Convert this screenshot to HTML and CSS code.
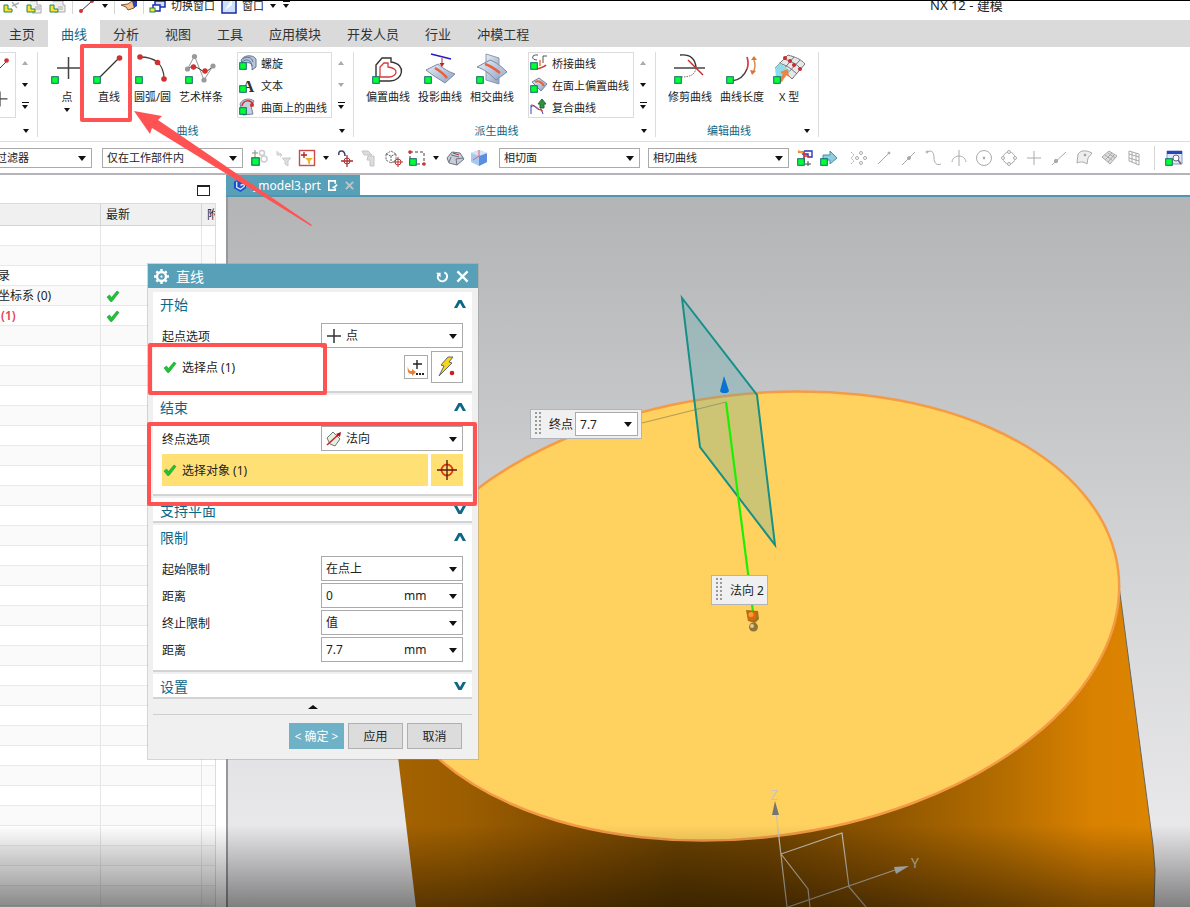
FILE: index.html
```html
<!DOCTYPE html>
<html lang="zh-CN">
<head>
  <meta charset="utf-8">
  <title>NX 12 - 建模</title>
  <link rel="stylesheet" href="styles.css">
</head>
<body>
  <svg class="sprite" width="0" height="0" aria-hidden="true">
    <defs>
      <linearGradient id="surface" x1="0" y1="0" x2="1" y2="1">
        <stop offset="0" stop-color="#e6edf6"/><stop offset="1" stop-color="#8fa3c4"/>
      </linearGradient>
    </defs>
    <symbol id="green" viewBox="0 0 8 8"><rect x=".7" y=".7" width="6.6" height="6.6" fill="#0f3" stroke="#126a6a"/></symbol>
    <symbol id="check" viewBox="0 0 14 14"><path d="M1 8 3.500 6 5.500 8.500 11 2 13 3.500 6 12.500 4.500 12.500Z" fill="#1fc436" stroke="#129a28" stroke-width=".6"/></symbol>
    <symbol id="up" viewBox="0 0 12 10"><path d="M0 9 4.400 1H7.600L12 9H8.800L6 4 3.200 9Z" fill="#0d6787"/></symbol>
    <symbol id="down" viewBox="0 0 12 10"><path d="M0 1 4.400 9H7.600L12 1H8.800L6 6 3.200 1Z" fill="#0d6787"/></symbol>
  </svg>

  <header class="quickbar">
    <div class="quick-tools">
      <svg class="qi" viewBox="0 0 18 14"><path d="M1 4h4v4h4v3H1z" fill="#ffdf33" stroke="#22884c"/><path d="M9 1l5 6M16 2L9 5" stroke="#a9adb2" fill="none" stroke-width="1.500"/></svg>
      <svg class="qi" viewBox="0 0 18 14"><path d="M4 0h7v4h4v8H6" fill="#f2f2f2" stroke="#aaa"/><path d="M1 4h4v4h4v3H1z" fill="#ffdf33" stroke="#22884c"/><path d="M9 6h5M9 8h5" stroke="#aaa"/></svg>
      <svg class="qi" viewBox="0 0 18 14"><path d="M3 0h11v4h2v7H6" fill="#eee" stroke="#aaa"/><path d="M1 4h4v4h4v3H1z" fill="#ffdf33" stroke="#22884c"/><path d="M9 6h5M9 8h5" stroke="#aaa"/></svg>
      <span class="qsep"></span>
      <svg class="qi" viewBox="0 0 18 14"><path d="M3 10 13 1" stroke="#333"/><circle cx="3" cy="10" r="2" fill="#c33"/><circle cx="14" cy="0" r="2" fill="#c33"/></svg>
      <i class="caret"></i>
      <span class="qsep"></span>
      <svg class="qi" viewBox="0 0 18 14"><path d="M1 4 8 3 12 0 16 2 14 7 8 9 6 6Z" fill="#f3c58c" stroke="#7b5a3a"/><path d="M12 0 17-1 17 5 14 7Z" fill="#2f3fb5"/></svg>
      <span class="qsep"></span>
      <svg class="qi" viewBox="0 0 18 14"><path d="M6 0h10v6H6z" fill="#cfe0ff" stroke="#1b2cb5" stroke-width="1.500"/><path d="M4 4h7v6H4z" fill="#fff" stroke="#1b2cb5" stroke-width="1.500"/><rect x="1" y="7" width="5" height="4" fill="#ffdf33" stroke="#22884c"/></svg>
      <span>切换窗口</span>
      <svg class="qi window" viewBox="0 0 18 14"><rect x="2" y="-4" width="14" height="16" fill="#cfe0ff" stroke="#1a2a9c" stroke-width="1.500"/><path d="M5 9 12-2v6z" fill="#fff"/></svg>
      <span>窗口</span>
      <i class="caret"></i>
      <i class="caret more"></i>
    </div>
    <div class="app-title">NX 12 - 建模</div>
  </header>

  <nav class="tabs">
    <button>主页</button>
    <button class="active">曲线</button>
    <button>分析</button>
    <button>视图</button>
    <button>工具</button>
    <button>应用模块</button>
    <button>开发人员</button>
    <button>行业</button>
    <button>冲模工程</button>
  </nav>

  <div class="ribbon">
    <section class="group first">
      <div class="tools">
        <div class="gallery cut">
          <svg viewBox="0 0 16 66"><path d="M-2 18 7 9" stroke="#333"/><circle cx="7" cy="8" r="2.500" fill="#c33"/><path d="M-2 49H8M0 41V57" stroke="#444" stroke-width="1.300"/></svg>
        </div>
        <div class="scroller"><i class="caret dim flip"></i><i class="caret"></i><i class="caret more"></i></div>
      </div>
      <div class="caption"><span></span><i class="caret"></i></div>
    </section>

    <section class="group">
      <div class="tools">
        <button class="tool">
          <svg viewBox="0 0 32 32"><path d="M6 14H29M17.500 3V25" stroke="#444" stroke-width="1.500"/><use href="#green" y="22" width="8" height="8"/></svg>
          点<i class="caret"></i>
        </button>
        <button class="tool">
          <svg viewBox="0 0 32 32"><path d="M5 25 26 4" stroke="#333" stroke-width="1.300"/><circle cx="26.500" cy="4" r="2.800" fill="#cf3030"/><use href="#green" y="22" width="8" height="8"/></svg>
          直线
        </button>
        <button class="tool">
          <svg viewBox="0 0 32 32"><path d="M3 3C18 3 27 10 27 25" fill="none" stroke="#444" stroke-width="1.300"/><g fill="#cf3030"><circle cx="3" cy="3" r="2.800"/><circle cx="20.500" cy="8.500" r="2.800"/><circle cx="27" cy="25" r="2.800"/></g><use href="#green" x="-2" y="22" width="8" height="8"/></svg>
          圆弧/圆
        </button>
        <button class="tool">
          <svg viewBox="0 0 32 32"><path d="M2.500 15 9.500 2 19 26 28 12" fill="none" stroke="#999"/><path d="M2 15C7 11 12 13 16 16S22 18 28 12" fill="none" stroke="#333"/><g fill="#999"><circle cx="9.500" cy="2.500" r="2.600"/><circle cx="2.500" cy="15" r="2.600"/><circle cx="19" cy="26" r="2.600"/><circle cx="28" cy="12" r="2.600"/></g><circle cx="8.500" cy="13" r="2.700" fill="#cf3030"/><circle cx="20" cy="17" r="2.700" fill="#cf3030"/><use href="#green" y="22" width="8" height="8"/></svg>
          艺术样条
        </button>
        <div class="gallery">
          <button><svg viewBox="0 0 20 20"><path d="M3 8C4 2 15 1 18 6V14L14 17C15 10 11 8 6 11Z" fill="#b7c4da" stroke="#66748e"/><path d="M5 6C9 3 14 4 15 9M4 9C9 5 13 7 14 13" fill="none" stroke="#5b6d90"/><use href="#green" x="1" y="9" width="8" height="8"/></svg>螺旋</button>
          <button><svg viewBox="0 0 20 20"><text x="4" y="17" font-family="Liberation Serif" font-weight="bold" font-size="17" fill="#333">A</text><use href="#green" x="1" y="10" width="8" height="8"/></svg>文本</button>
          <button><svg viewBox="0 0 20 20"><path d="M2 7C5 1 12 1 16 4L13 9 15 17 5 18Z" fill="#c3cede" stroke="#75819a"/><path d="M4 9C5 3 12 2 15 7" fill="none" stroke="#cf3030" stroke-width="1.500"/><circle cx="14" cy="8" r="2" fill="#cf3030"/><use href="#green" x="1" y="10" width="8" height="8"/></svg>曲面上的曲线</button>
        </div>
        <div class="scroller"><i class="caret dim flip"></i><i class="caret dim"></i><i class="caret more"></i></div>
      </div>
      <div class="caption"><span>曲线</span><i class="caret"></i></div>
    </section>

    <section class="group">
      <div class="tools">
        <button class="tool">
          <svg viewBox="0 0 32 32"><path d="M4 26V11L10 4H19V8C35 10 31 27 18 27H4Z" fill="#fff" stroke="#333" stroke-width="1.400"/><path d="M8 23V13L12 9H16V13C28 14 25 23 17 23Z" fill="none" stroke="#d83a3a" stroke-width="1.300"/><use href="#green" y="22" width="8" height="8"/></svg>
          偏置曲线
        </button>
        <button class="tool">
          <svg viewBox="0 0 32 32"><path d="M2 16 14 10C20 15 25 18 31 20L21 29C15 25 8 21 2 16Z" fill="url(#surface)" stroke="#7d8ba6"/><path d="M11 14C16 17 20 20 23 24" fill="none" stroke="#e8603c" stroke-width="2.500"/><path d="M7 0 27 5" stroke="#2020c8" stroke-width="1.800"/><path d="M18 4V11" stroke="#b22"/><path d="M15.500 9H20.500L18 13Z" fill="#b22"/><use href="#green" y="22" width="8" height="8"/></svg>
          投影曲线
        </button>
        <button class="tool">
          <svg viewBox="0 0 32 32"><path d="M10 0 23 4V30L10 26Z" fill="url(#surface)" stroke="#8c99b0"/><path d="M1 13 14 6C20 8 26 13 31 18L20 26C14 20 8 15 1 13Z" fill="url(#surface)" fill-opacity=".9" stroke="#7d8ba6"/><path d="M9 10C15 12 19 15 24 19" fill="none" stroke="#e8603c" stroke-width="2.500"/><use href="#green" y="22" width="8" height="8"/></svg>
          相交曲线
        </button>
        <div class="gallery">
          <button><svg viewBox="0 0 20 20"><path d="M9 2C2 1 2 7 8 7M18 3H14V10" fill="none" stroke="#555"/><path d="M8 16C12 15 15 14 17 12" fill="none" stroke="#cf3030" stroke-width="1.500"/><path d="M11 7V13" stroke="#e67a35" stroke-width="1.500"/><use href="#green" x="1" y="9" width="8" height="8"/></svg>桥接曲线</button>
          <button><svg viewBox="0 0 20 20"><path d="M3 7 10 3 18 9 12 16Z" fill="url(#surface)" stroke="#75819a"/><path d="M6 7C9 5 13 7 15 11" fill="none" stroke="#e8603c" stroke-width="2"/><use href="#green" x="1" y="10" width="8" height="8"/></svg>在面上偏置曲线</button>
          <button><svg viewBox="0 0 20 20"><path d="M2 17V8M2 10C6 6 8 15 12 12L14 17" fill="none" stroke="#3b45b5"/><path d="M2 8C7 8 9 13 14 14" fill="none" stroke="#cf3030"/><path d="M13 2 17 7H15V11H11V7H9Z" fill="#2f9144" stroke="#1d6b2e"/></svg>复合曲线</button>
        </div>
        <div class="scroller"><i class="caret dim flip"></i><i class="caret"></i><i class="caret more"></i></div>
      </div>
      <div class="caption"><span>派生曲线</span><i class="caret"></i></div>
    </section>

    <section class="group">
      <div class="tools">
        <button class="tool">
          <svg viewBox="0 0 32 32"><path d="M6 1C16 0 21 4 22 13" fill="none" stroke="#333" stroke-width="1.400"/><path d="M0 14H31" stroke="#444" stroke-width="1.500"/><path d="M22 14C21 21 16 23 7 23" fill="none" stroke="#777" stroke-dasharray="1.500 1"/><path d="M14 6 29 21" stroke="#c92a2a" stroke-width="1.400"/><use href="#green" y="22" width="8" height="8"/></svg>
          修剪曲线
        </button>
        <button class="tool">
          <svg viewBox="0 0 32 32"><path d="M6 27C15 26 19 20 21 15" fill="none" stroke="#444" stroke-width="1.500"/><path d="M21 15C23 10 22 6 21 3" fill="none" stroke="#d83a3a" stroke-width="1.700"/><path d="M28 6C30 11 29 15 27 19" fill="none" stroke="#d88a55" stroke-width="1.500"/><path d="M25 6 28 2 31 6ZM24 16 26 21 30 17Z" fill="#dd743c"/><use href="#green" y="22" width="8" height="8"/></svg>
          曲线长度
        </button>
        <button class="tool">
          <svg viewBox="0 0 32 32"><path d="M2 14 15 1C22 3 28 5 32 10L19 25C14 19 9 17 2 14Z" fill="#e5e7ea" stroke="#777"/><path d="M6 9C13 11 19 15 24 20M11 5C18 7 24 10 28 15M9 17 21 3M14 20 27 6" fill="none" stroke="#777"/><path d="M2 14 7 9 17 17 12 24 3 24Z" fill="#8edbe9"/><path d="M5 27 10 20 7 18 15 15 16 23 13 21 9 28Z" fill="#ef8440"/><g fill="#c92a2a"><circle cx="12" cy="4" r="2"/><circle cx="17" cy="7" r="2"/><circle cx="21" cy="11" r="2"/><circle cx="27" cy="15" r="2"/></g><use href="#green" y="22" width="8" height="8"/></svg>
          X 型
        </button>
      </div>
      <div class="caption"><span>编辑曲线</span><i class="caret"></i></div>
    </section>
  </div>

  <div class="selection-bar">
    <label class="combo bar-combo leading"><select aria-label="选择过滤器"><option>无选择过滤器</option></select></label>
    <label class="combo bar-combo"><select aria-label="选择范围"><option>仅在工作部件内</option></select></label>
    <div class="icon-row">
      <svg viewBox="0 0 20 20"><path d="M6 2V10M3 5H9" stroke="#888"/><circle cx="13" cy="5" r="2.500" fill="none" stroke="#ccc" stroke-width="1.500"/><circle cx="15" cy="11" r="3" fill="none" stroke="#ccc" stroke-width="1.500"/><use href="#green" x="2" y="9" width="9" height="9"/></svg>
      <svg viewBox="0 0 20 20"><path d="M4 3V7H9L7 5M9 7 7 9M9 10H18L15 13V18L12 16V13Z" fill="#ddd" stroke="#ccc"/></svg>
      <svg viewBox="0 0 20 20"><rect x="2.500" y="2.500" width="15" height="15" fill="#fff" stroke="#cc4a4a" stroke-width="1.400"/><path d="M7 4V10M4 7H10" stroke="#a22" stroke-width="1.300"/><path d="M8 10H16L13 13V17L11 15V13Z" fill="#f0b429"/></svg>
      <i class="caret"></i>
      <svg viewBox="0 0 20 20"><path d="M4 7C2 2 10 1 10 8" fill="none" stroke="#3a3f66" stroke-width="1.500"/><circle cx="12" cy="13" r="3" fill="none" stroke="#a33"/><path d="M12 7V19M6 13H18" stroke="#a33" stroke-width="1.300"/></svg>
      <svg viewBox="0 0 20 20"><path d="M3 3H9L13 7H9L5 7ZM9 8H15V18H11V12H8Z" fill="#ddd" stroke="#c4c4c4"/></svg>
      <svg viewBox="0 0 20 20"><path d="M3 6 8 3 13 6V12L8 15 3 12ZM3 6 8 8 13 6M8 8V15" fill="none" stroke="#666" stroke-dasharray="2 1"/><circle cx="15" cy="14" r="3" fill="#fff" stroke="#b33"/><path d="M15 9V19M10 14H20" stroke="#b33"/></svg>
      <svg viewBox="0 0 20 20"><rect x="3" y="4" width="14" height="12" fill="none" stroke="#444" stroke-dasharray="3 2"/><circle cx="3" cy="4" r="1.800" fill="#cf3030"/><circle cx="17" cy="16" r="1.800" fill="#cf3030"/><use href="#green" x="2" y="10" width="8" height="8"/></svg>
      <i class="caret"></i>
      <svg viewBox="0 0 20 20"><path d="M2 10 7 4 15 5 19 11 12 17 4 15Z" fill="#c9cdd6" stroke="#6d7484"/><path d="M6 7 14 9M12 17 11 11 18 10M4 14 6 9" fill="none" stroke="#6d7484"/><path d="M8 5 14 7" stroke="#cf3030"/></svg>
      <svg viewBox="0 0 20 20"><path d="M2 5 10 2 18 5V14L10 18 2 14Z" fill="#a6c8f2"/><path d="M10 8V18L18 14V5Z" fill="#5a8fe0"/><path d="M2 5 10 2 18 5 10 8Z" fill="#d3e3f8"/><path d="M10 2V8L4 12" fill="none" stroke="#d66"/></svg>
    </div>
    <label class="combo bar-combo"><select aria-label="面规则"><option>相切面</option></select></label>
    <label class="combo bar-combo"><select aria-label="曲线规则"><option>相切曲线</option></select></label>
    <div class="icon-row">
      <svg viewBox="0 0 20 20"><path d="M9 3H17V9H13V6H7" fill="#fff" stroke="#2a36b5" stroke-width="1.400"/><path d="M3 4H9V14M9 8H14" fill="none" stroke="#c33" stroke-width="1.700"/><path d="M3 3 8 5" stroke="#f4a12b" stroke-width="2"/><path d="M10 16H16M13 13V18" stroke="#444"/><use href="#green" x="2" y="10" width="8" height="8"/></svg>
      <svg viewBox="0 0 20 20"><path d="M4 7H11V3L18 10 11 16V12H4Z" fill="#8ccfe3" stroke="#4b8ea6"/><use href="#green" x="1" y="10" width="8" height="8"/></svg>
    </div>
    <div class="icon-row snaps">
      <svg viewBox="0 0 20 20"><path d="M2 4 5 7 2 10 5 13 2 16" stroke-dasharray="2 1"/><circle cx="12" cy="5" r="1.500"/><circle cx="8" cy="10" r="1.500"/><circle cx="16" cy="10" r="1.500"/><circle cx="12" cy="15" r="1.500"/></svg>
      <svg viewBox="0 0 20 20"><path d="M4 16 15 5"/><circle cx="15" cy="5" r="1" fill="#aaa"/></svg>
      <svg viewBox="0 0 20 20"><path d="M3 17 16 4"/><circle cx="10" cy="10" r="1.500" fill="#aaa"/></svg>
      <svg viewBox="0 0 20 20"><path d="M3 4C9 1 10 6 10 10S12 18 17 16"/><circle cx="3" cy="4" r="1"/></svg>
      <svg viewBox="0 0 20 20"><path d="M10 2V18M3 14C4 6 16 6 17 14"/></svg>
      <svg viewBox="0 0 20 20"><circle cx="10" cy="10" r="7.500"/><circle cx="10" cy="10" r="1" fill="#aaa"/></svg>
      <svg viewBox="0 0 20 20"><circle cx="10" cy="10" r="6"/><circle cx="10" cy="4" r="1.500" fill="#fff"/><circle cx="4" cy="10" r="1.500" fill="#fff"/><circle cx="16" cy="10" r="1.500" fill="#fff"/><circle cx="10" cy="16" r="1.500" fill="#fff"/></svg>
      <svg viewBox="0 0 20 20"><path d="M10 3V17M3 10H17"/></svg>
      <svg viewBox="0 0 20 20"><path d="M3 17 17 4"/><circle cx="7" cy="13" r="1.700" fill="#aaa"/></svg>
      <svg viewBox="0 0 20 20"><path d="M4 6C7 2 12 2 18 5L14 10 13 16C9 13 6 14 3 15Z" fill="#eee"/><circle cx="11" cy="7" r="1" fill="#888"/></svg>
      <svg viewBox="0 0 20 20"><path d="M3 9 10 3 18 8 11 16Z" fill="#ddd"/><path d="M6 7 13 12M9 5 16 10M6 12 13 5M9 14 15 7"/></svg>
      <svg viewBox="0 0 20 20"><path d="M5 3 15 6V17L5 13ZM8 4V14M12 5V16M5 6 15 9M5 10 15 13"/></svg>
    </div>
    <span class="bar-sep"></span>
    <div class="icon-row">
      <svg viewBox="0 0 20 20"><path d="M3 3H18V16H3Z" fill="#dfe6f5" stroke="#8a97cc"/><path d="M3 3H18V6H3Z" fill="#2746b8"/><circle cx="12" cy="10" r="3" fill="#fff" stroke="#667"/><path d="M14 12 17 16" stroke="#667" stroke-width="1.500"/><use href="#green" x="1" y="10" width="8" height="8"/></svg>
    </div>
  </div>

  <main class="workspace">
    <aside class="navigator">
      <div class="nav-head"><button class="restore" aria-label="还原"></button></div>
      <div class="tree">
        <table>
          <thead><tr><th class="name">名称</th><th class="state">最新</th><th>附注</th></tr></thead>
          <tbody id="rows">
            <tr><td></td><td></td><td></td></tr>
            <tr><td></td><td></td><td></td></tr>
            <tr><td class="l1">历史记录</td><td></td><td></td></tr>
            <tr><td class="l2">基准坐标系 (0)</td><td><svg class="check"><use href="#check"/></svg></td><td></td></tr>
            <tr><td class="l2 current">直线 (1)</td><td><svg class="check"><use href="#check"/></svg></td><td></td></tr>
          </tbody>
        </table>
      </div>
    </aside>

    <div class="document">
      <div class="doc-tabs">
        <div class="doc-tab">
          <svg viewBox="0 0 16 16"><path d="M2 4 8 1 15 4V11L9 15 2 11Z" fill="#1d4fc4"/><path d="M5 4V10L9 12 13 9V6L9 8" fill="none" stroke="#cfe0ff" stroke-width="1.500"/></svg>
          <span>_model3.prt</span>
          <svg class="small" viewBox="0 0 12 12"><path d="M9 4V1H2V11H9V9M6 8H8L11 5" fill="none" stroke="#fff" stroke-width="1.800"/></svg>
          <button class="close" aria-label="关闭"><svg class="small" viewBox="0 0 12 12"><path d="M2 2 10 10M10 2 2 10" stroke="#c3c3c3" stroke-width="2"/></svg></button>
        </div>
      </div>
      <div class="viewport">
        <svg class="scene" viewBox="228 197 962 710" preserveAspectRatio="xMinYMin slice">
          <defs>
            <linearGradient id="side" gradientUnits="userSpaceOnUse" x1="384" y1="0" x2="1155" y2="0">
              <stop offset="0" stop-color="#a66300"/><stop offset=".1" stop-color="#9c5e00"/><stop offset=".22" stop-color="#864f00"/><stop offset=".38" stop-color="#6b4200"/><stop offset=".5" stop-color="#734500"/><stop offset=".65" stop-color="#8f5600"/><stop offset=".8" stop-color="#b36c00"/><stop offset=".92" stop-color="#d98100"/><stop offset="1" stop-color="#dc8500"/>
            </linearGradient>
          </defs>
          <path d="M384 640 416 907H1154L1155 870 1153 845 1119 586Z" fill="url(#side)"/>
          <path d="M1119 586 1153 845 1155 870 1154 907" fill="none" stroke="#6b665c"/>
          <ellipse cx="751" cy="616" rx="370" ry="221.500" transform="rotate(-7.100 751 616)" fill="#ffd15f" stroke="#f59b45" stroke-width="2.500"/>
          <path d="M642 423 726 402" stroke="#b59a55" stroke-width="1.200"/>
          <path d="M682 298 757 395 775 545 700 447Z" fill="#4aa5a8" fill-opacity=".28" stroke="#149088" stroke-width="2"/>
          <path d="M724 376 729 391C728 394 721 394 720 391Z" fill="#0a72d0"/>
          <path d="M726 402 753 612" stroke="#1cf000" stroke-width="2.200"/>
          <path d="M746 610 758 611 759 619 755 623 748 621Z" fill="#a3701f"/>
          <circle cx="752" cy="616" r="4.500" fill="#d9690c"/><circle cx="751" cy="614.500" r="2.500" fill="#ff9a2e"/>
          <circle cx="753.500" cy="627" r="4.500" fill="#8f7638"/><circle cx="752" cy="626" r="2" fill="#e0c88c"/>
          <g fill="none" stroke="#c9c3b6" stroke-width="1.200">
            <path d="M776 812 787 907M781 854 842 833 849 887 866 907M781 854 808 889 810 907M788 907 898 869"/>
          </g>
          <path d="M775 801 779 815H772Z" fill="#77756f"/>
          <path d="M909 866 894 867 896 874Z" fill="#c9d0d4"/>
          <text x="770" y="800" class="axis">Z</text>
          <text x="911" y="868" class="axis">Y</text>
        </svg>

        <div class="tag end-tag">
          <i class="grip"></i>
          <label for="end-value">终点</label>
          <span class="combo tag-combo"><input id="end-value" value="7.7"></span>
        </div>
        <div class="tag normal-tag"><i class="grip"></i><span>法向 2</span></div>
      </div>
    </div>

    <form class="dialog">
      <div class="dialog-title">
        <svg viewBox="0 0 16 16"><circle cx="8" cy="8" r="4.800" fill="none" stroke="#fff" stroke-width="2.600"/><circle cx="8" cy="8" r="1.200" fill="#fff"/><path d="M8 0V3M8 13V16M0 8H3M13 8H16M2.500 2.500 4.500 4.500M11.500 11.500 13.500 13.500M13.500 2.500 11.500 4.500M2.500 13.500 4.500 11.500" stroke="#fff" stroke-width="2.600"/></svg>
        <span>直线</span>
        <button type="button" aria-label="重置"><svg viewBox="0 0 14 14"><path d="M3 4C0 9 4 13 8 12S14 5 9 2.500" fill="none" stroke="#fff" stroke-width="2"/><path d="M0 3H5V8Z" fill="#fff"/></svg></button>
        <button type="button" aria-label="关闭"><svg viewBox="0 0 14 14"><path d="M1.500 1.500 12.500 12.500M12.500 1.500 1.500 12.500" stroke="#fff" stroke-width="2.400"/></svg></button>
      </div>

      <div class="sections">
        <section class="block">
          <h2>开始<svg class="chev"><use href="#up"/></svg></h2>
          <div class="row">
            <label for="start-opt">起点选项</label>
            <span class="combo with-icon"><svg viewBox="0 0 16 16"><path d="M8 1V15M1 8H15" stroke="#333" stroke-width="1.500"/></svg><select id="start-opt"><option>点</option></select></span>
          </div>
          <div class="row pick">
            <span class="pick-label"><svg class="check"><use href="#check"/></svg>选择点 (1)</span>
            <button type="button" class="sq" aria-label="点对话框"><svg viewBox="0 0 20 20"><path d="M11 3V12M7 7H16" stroke="#222" stroke-width="1.400"/><path d="M2 9C2 12 3 14 6 14V12L10 15 6 19V17C2 17 1 14 2 9Z" fill="#e5813a"/><path d="M10 17H18" stroke="#222" stroke-width="2" stroke-dasharray="2 1"/></svg></button>
            <button type="button" class="sq big" aria-label="自动判断的点"><svg viewBox="0 0 26 26"><path d="M14 3 19 3 15 8 18 9 5 22 10 12 7 11Z" fill="#f6d423" stroke="#666"/><circle cx="18" cy="19" r="2.300" fill="#d01f1f"/></svg></button>
          </div>
        </section>

        <section class="block">
          <h2>结束<svg class="chev"><use href="#up"/></svg></h2>
          <div class="row">
            <label for="end-opt">终点选项</label>
            <span class="combo with-icon"><svg viewBox="0 0 16 16"><path d="M1 7 7 1 14 8 9 15 4 13Z" fill="#e7efe4" stroke="#697a68"/><path d="M1 14 12 4" stroke="#c22" stroke-width="1.500"/><path d="M15 1 14 6 10 3Z" fill="#a11"/></svg><select id="end-opt"><option>法向</option></select></span>
          </div>
          <div class="row pick picked">
            <span class="pick-label"><svg class="check"><use href="#check"/></svg>选择对象 (1)</span>
            <button type="button" class="target" aria-label="选择"><svg viewBox="0 0 20 20"><circle cx="10" cy="10" r="5.500" fill="none" stroke="#e03a10" stroke-width="1.800"/><path d="M10 0V20M0 10H20" stroke="#5a1e10" stroke-width="1.400"/></svg></button>
          </div>
        </section>

        <section class="block folded"><h2>支持平面<svg class="chev"><use href="#down"/></svg></h2></section>

        <section class="block">
          <h2>限制<svg class="chev"><use href="#up"/></svg></h2>
          <div class="row"><label for="lim-start">起始限制</label><span class="combo"><select id="lim-start"><option>在点上</option></select></span></div>
          <div class="row"><label for="dist-start">距离</label><span class="combo"><input id="dist-start" value="0"><em>mm</em></span></div>
          <div class="row"><label for="lim-end">终止限制</label><span class="combo"><select id="lim-end"><option>值</option></select></span></div>
          <div class="row"><label for="dist-end">距离</label><span class="combo"><input id="dist-end" value="7.7"><em>mm</em></span></div>
        </section>

        <section class="block folded"><h2>设置<svg class="chev"><use href="#down"/></svg></h2></section>
      </div>

      <div class="fold-line"><i class="caret flip"></i></div>
      <div class="actions">
        <button type="button" class="ok">&lt; 确定 &gt;</button>
        <button type="button">应用</button>
        <button type="button">取消</button>
      </div>
    </form>
  </main>

  <div class="shade"></div>
  <svg class="marks" width="480" height="520" viewBox="0 0 480 520" aria-hidden="true">
    <g fill="none" stroke="#ff5353" stroke-width="4" stroke-linejoin="round">
      <rect x="82" y="46" width="48" height="74"/>
      <rect x="150" y="345" width="175" height="48"/>
      <rect x="149" y="424" width="326" height="80"/>
    </g>
    <path d="M134 111 162 116 158 120 312 225 311 226 152 128 150 134Z" fill="#ff5353"/>
  </svg>

  <script>
    // pad the tree with blank rows down to the bottom of the window
    const rows = document.getElementById("rows");
    for (let i = 0; i < 40; i++) {
      rows.insertRow().innerHTML = "<td></td><td></td><td></td>";
    }
  </script>
</body>
</html>
```

FILE: styles.css
```css
* {
  box-sizing: border-box;
}

body {
  margin: 0;
  height: 100vh;
  display: flex;
  flex-direction: column;
  position: relative;
  overflow: hidden;
  background: #fff;
  color: #222;
  font-family: "Noto Sans", "Noto Sans CJK SC", sans-serif;
  font-size: 12px;
}

button,
input,
select {
  font: inherit;
  color: inherit;
  margin: 0;
  padding: 0;
  border: none;
  background: none;
}

svg {
  display: block;
  flex: none;
}

.sprite {
  position: absolute;
}

.caret {
  flex: none;
  width: 0;
  height: 0;
  border: 3px solid transparent;
  border-top: 4px solid #111;
  border-bottom: none;
}

.caret.flip {
  transform: rotate(180deg);
}

.caret.dim {
  border-top-color: #aaa;
}

.caret.more {
  position: relative;
}

.caret.more::before {
  content: "";
  position: absolute;
  left: -3px;
  top: -7px;
  width: 7px;
  height: 1px;
  background: #111;
}

/* title strip */
.quickbar {
  flex: none;
  display: flex;
  height: 20px;
  border-top: 1px solid #000;
  overflow: hidden;
  line-height: 9px;
}

.quick-tools {
  flex: 1;
  display: flex;
  align-items: flex-start;
  gap: 5px;
  padding-left: 3px;
  font-size: 11px;
}

.qi {
  width: 18px;
  height: 14px;
  overflow: visible;
}

.quick-tools .caret {
  margin: 3px 1px 0;
}

.quick-tools span {
  margin-left: -1px;
}

.quick-tools .qsep {
  width: 1px;
  height: 13px;
  margin: 0;
  background: #d5d5d5;
}

.app-title {
  width: 260px;
  font-size: 13px;
}

.tabs {
  flex: none;
  display: flex;
  height: 27px;
  background: #dadada;
}

.tabs button {
  padding: 0 13px;
  font-size: 13px;
  color: #333;
}

.tabs button:first-child {
  margin-left: -4px;
}

.tabs .active {
  background: #fff;
  color: #0d6787;
}

/* ribbon */
.ribbon {
  flex: none;
  display: flex;
  height: 95px;
  padding-top: 5px;
  border-bottom: 1px solid #dedede;
  font-size: 11px;
}

.group {
  display: flex;
  flex-direction: column;
  height: 85px;
  border-right: 1px solid #dcdcdc;
}

.tools {
  flex: none;
  display: flex;
  height: 72px;
  padding-left: 8px;
}

.group.first .tools {
  padding-left: 0;
}

.tool {
  display: flex;
  flex-direction: column;
  align-items: center;
  min-width: 42px;
  padding: 2px 4px 0;
  line-height: 22px;
  white-space: nowrap;
}

.tool svg {
  width: 32px;
  height: 32px;
  overflow: visible;
}

.group .tool:last-child {
  margin-right: 8px;
}

.gallery {
  margin-left: 10px;
  height: 66px;
  border: 1px solid #dcdcdc;
}

.gallery.cut {
  width: 16px;
  margin-left: 0;
  border-left: none;
}

.gallery button {
  display: flex;
  align-items: center;
  gap: 3px;
  height: 22px;
  padding: 0 4px 2px 0;
  white-space: nowrap;
}

.gallery button svg {
  width: 20px;
  height: 20px;
}

.scroller {
  width: 21px;
  height: 66px;
  display: flex;
  flex-direction: column;
  align-items: center;
  justify-content: space-between;
  padding: 9px 3px 9px 0;
}

.caption {
  display: flex;
  align-items: center;
  height: 13px;
  line-height: 13px;
  color: #0d6787;
}

.caption span {
  flex: 1;
  text-align: center;
}

.caption .caret {
  margin: 0 8px 0 2px;
}

/* combos share one caret drawn on the wrapper */
.combo {
  position: relative;
  display: flex;
  align-items: center;
  background: #fff;
  border: 1px solid #aaa;
}

.combo::after {
  content: "";
  position: absolute;
  right: 5px;
  top: 50%;
  margin-top: -2px;
  border: 4px solid transparent;
  border-top: 5px solid #111;
  border-bottom: none;
  pointer-events: none;
}

.combo select,
.combo input {
  appearance: none;
  flex: 1;
  min-width: 0;
  height: 100%;
  padding-left: 4px;
  outline: none;
}

.selection-bar {
  flex: none;
  display: flex;
  align-items: center;
  height: 33px;
  border-bottom: 2px solid #b4b4ba;
}

.bar-combo {
  flex: none;
  width: 141px;
  height: 20px;
  margin-right: 8px;
  font-size: 11px;
}

.bar-combo.leading {
  width: 134px;
  margin-left: -42px;
  margin-right: 10px;
}

.icon-row {
  flex: none;
  display: flex;
  align-items: center;
  gap: 4px;
  margin-right: 10px;
}

.icon-row svg {
  width: 20px;
  height: 20px;
}

.icon-row .caret {
  margin: 0 2px;
}

.bar-combo + .icon-row {
  margin-left: -2px;
}

.snaps {
  gap: 5px;
  fill: none;
  stroke: #aaa;
  stroke-width: 1px;
}

.bar-sep {
  flex: none;
  width: 1px;
  height: 24px;
  margin-right: 9px;
  background: #d5d5d5;
}

/* work area */
.workspace {
  flex: 1;
  min-height: 0;
  display: flex;
  position: relative;
}

.navigator {
  flex: none;
  width: 226px;
  display: flex;
  flex-direction: column;
  padding-right: 10px;
}

.nav-head {
  flex: none;
  display: flex;
  justify-content: flex-end;
  align-items: center;
  height: 28px;
  padding: 2px 6px 0 0;
}

.restore {
  width: 13px;
  height: 11px;
  border: 1px solid #222;
  border-top-width: 2px;
}

.tree {
  flex: 1;
  min-height: 0;
  overflow: hidden;
  border-top: 1px solid #dcdcdc;
  border-right: 1px solid #dcdcdc;
}

.tree table {
  table-layout: fixed;
  width: 275px;
  margin-left: -60px;
  border-collapse: separate;
  border-spacing: 0;
}

.tree th,
.tree td {
  height: 20px;
  padding: 0 5px;
  border-right: 1px solid #e6e6e6;
  border-bottom: 1px solid #e9e9e9;
  line-height: 16px;
  white-space: nowrap;
  overflow: hidden;
}

.tree th {
  height: 22px;
  background: #f0f0f0;
  border-color: #d4d4d4;
  font-weight: normal;
  text-align: left;
}

.tree th:last-child,
.tree td:last-child {
  border-right: none;
}

.tree .name {
  width: 161px;
}

.tree .state {
  width: 101px;
}

.tree tr:nth-child(even) td {
  background: #fafafa;
}

.tree .l1 {
  padding-left: 22px;
}

.tree .l2 {
  padding-left: 34px;
}

.tree .current {
  color: #e8404f;
  font-weight: 600;
}

.check {
  width: 14px;
  height: 14px;
}

.document {
  flex: 1;
  min-width: 0;
  display: flex;
  flex-direction: column;
}

.doc-tabs {
  flex: none;
  display: flex;
  height: 22px;
  border-bottom: 2px solid #4f97ae;
}

.doc-tab {
  display: flex;
  align-items: center;
  gap: 6px;
  padding: 0 5px 0 6px;
  background: #57a0b8;
  color: #fff;
  font-size: 12px;
}

.doc-tab svg {
  width: 15px;
  height: 15px;
}

.doc-tab .small {
  width: 11px;
  height: 11px;
}

.viewport {
  flex: 1;
  min-height: 0;
  position: relative;
  overflow: hidden;
  border-left: 2px solid #98989c;
  background: linear-gradient(#b3b4b5, #d2d3d5 50%, #e8e8ea 88%);
}

.scene {
  width: 100%;
  height: 100%;
}

.axis {
  fill: #cbc5b8;
  font-family: "Open Sans", sans-serif;
  font-size: 14px;
}

.tag {
  position: absolute;
  display: flex;
  align-items: center;
  height: 30px;
  padding: 0 3px 0 4px;
  background: #f0f0f0;
  border: 1px solid #b0b4bc;
}

.grip {
  width: 8px;
  height: 24px;
  margin-right: 6px;
  background: radial-gradient(circle at 1px 1px, #999 1px, transparent 1px) 0 0 / 4px 4px;
}

.end-tag {
  left: 302px;
  top: 212px;
}

.normal-tag {
  left: 483px;
  top: 378px;
}

.tag-combo {
  width: 63px;
  height: 24px;
  margin-left: 2px;
}

/* line dialog */
.dialog {
  position: absolute;
  left: 148px;
  top: 89px;
  width: 330px;
  padding-bottom: 10px;
  background: #f0f0f0;
  box-shadow: 0 0 0 1px rgba(150, 150, 150, 0.4);
}

.dialog-title {
  display: flex;
  align-items: center;
  gap: 7px;
  height: 24px;
  padding: 0 9px 0 6px;
  background: #57a0b8;
  color: #fff;
  font-size: 14px;
}

.dialog-title svg {
  width: 15px;
  height: 15px;
}

.dialog-title button svg {
  width: 13px;
  height: 13px;
}

.dialog-title span {
  flex: 1;
}

.sections {
  display: flex;
  flex-direction: column;
  gap: 2px;
  padding: 4px 6px 0 5px;
}

.block {
  display: flex;
  flex-direction: column;
  gap: 2px;
  padding-bottom: 8px;
  background: #fff;
  border-bottom: 2px solid #d3d3d3;
}

.block h2 {
  display: flex;
  align-items: center;
  justify-content: space-between;
  height: 27px;
  margin: 0 0 2px;
  padding: 0 6px 3px 7px;
  color: #0d6787;
  font-size: 14px;
  font-weight: normal;
}

.block.folded {
  padding-bottom: 0;
}

.block.folded h2 {
  height: 23px;
  margin: 0;
  padding-bottom: 0;
}

.chev {
  width: 12px;
  height: 10px;
}

.row {
  display: flex;
  align-items: center;
  justify-content: space-between;
  height: 25px;
  padding: 0 9px;
}

.row .combo {
  width: 142px;
  height: 25px;
}

.with-icon svg {
  width: 16px;
  height: 16px;
  margin-left: 4px;
}

.combo em {
  width: 58px;
  font-style: normal;
}

.row.pick {
  height: 33px;
  gap: 3px;
}

.pick-label {
  flex: 1;
  display: flex;
  align-items: center;
  gap: 5px;
  height: 32px;
  padding-left: 1px;
}

.sq {
  display: flex;
  align-items: center;
  justify-content: center;
  width: 24px;
  height: 24px;
  background: #fff;
  border: 1px solid #aaa;
}

.sq svg {
  width: 20px;
  height: 20px;
}

.sq.big {
  width: 32px;
  height: 32px;
}

.sq.big svg {
  width: 26px;
  height: 26px;
}

.picked .pick-label,
.target {
  background: #ffe075;
}

.target {
  display: flex;
  align-items: center;
  justify-content: center;
  width: 32px;
  height: 32px;
}

.target svg {
  width: 20px;
  height: 20px;
}

.fold-line {
  display: flex;
  align-items: center;
  justify-content: center;
  height: 16px;
  margin: 0 6px 8px 5px;
  border-bottom: 1px solid #cfcfcf;
}

.fold-line .caret {
  border-width: 4px 5px 0;
}

.actions {
  display: flex;
  justify-content: flex-end;
  gap: 4px;
  padding-right: 16px;
}

.actions button {
  width: 55px;
  height: 26px;
  background: #dcdcdc;
  border: 1px solid #b0b0b0;
}

.actions .ok {
  background: #6fb1c6;
  border-color: #6fb1c6;
  color: #fff;
}

.shade {
  position: absolute;
  left: 0;
  right: 0;
  bottom: 0;
  height: 82px;
  background: linear-gradient(rgba(0, 0, 0, 0), rgba(0, 0, 0, 0.45));
  pointer-events: none;
}

.marks {
  position: absolute;
  left: 0;
  top: 0;
  pointer-events: none;
}
```
